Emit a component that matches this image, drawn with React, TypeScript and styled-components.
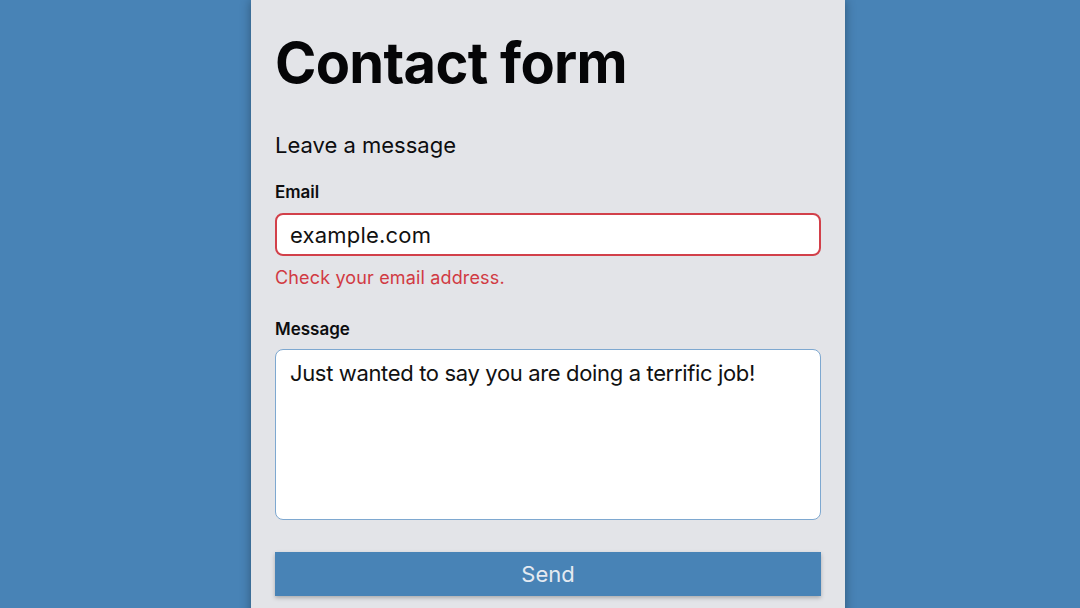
import React from "react";
import styled, { createGlobalStyle } from "styled-components";

const Global = createGlobalStyle`
  html, body { margin: 0; padding: 0; background: #4883b6; }
  body { font-family: Inter, "Noto Sans", sans-serif; color: #0d0d0f; }
  * { box-sizing: border-box; }
`;

const Page = styled.div`
  display: flex;
  justify-content: center;
  min-height: 100vh;
  padding-left: 16px;
`;

const Card = styled.main`
  width: 594px;
  min-height: 100vh;
  background: #e3e4e8;
  box-shadow: 0 0 10px rgba(0, 0, 0, 0.35);
  padding: 35px 24px 24px;
  display: flex;
  flex-direction: column;
`;

const Title = styled.h1`
  margin: 0;
  font-size: 56px;
  line-height: 56px;
  font-weight: 700;
  letter-spacing: -0.7px;
  color: #050507;
`;

const Subtitle = styled.h2`
  margin: 40px 0 0;
  font-size: 22px;
  line-height: 28px;
  font-weight: 400;
`;

const Label = styled.label<{ $top: number }>`
  display: block;
  margin-top: ${(p) => p.$top}px;
  font-size: 17px;
  line-height: 22px;
  font-weight: 600;
`;

const Input = styled.input<{ $invalid?: boolean }>`
  margin-top: 10px;
  width: 100%;
  height: 43px;
  border: 2px solid ${(p) => (p.$invalid ? "#d2404a" : "#7ea8d0")};
  border-radius: 8px;
  background: #fff;
  padding: 0 13px;
  font-family: inherit;
  font-size: 22px;
  letter-spacing: 0.2px;
  color: #111;
  outline: none;
`;

const ErrorText = styled.p`
  margin: 10px 0 0;
  font-size: 18px;
  line-height: 24px;
  letter-spacing: 0.15px;
  color: #d13a43;
`;

const TextArea = styled.textarea`
  margin-top: 9px;
  width: 100%;
  height: 171px;
  border: 1.5px solid #7ea8d0;
  border-radius: 8px;
  background: #fff;
  padding: 9px 14px;
  font-family: inherit;
  font-size: 22px;
  line-height: 28px;
  letter-spacing: -0.35px;
  color: #111;
  resize: none;
  outline: none;
`;

const Button = styled.button`
  margin-top: 32px;
  width: 100%;
  height: 44px;
  border: none;
  background: #4883b6;
  color: #e4eaf1;
  font-family: inherit;
  font-size: 22px;
  box-shadow: 0 2px 4px rgba(0, 0, 0, 0.25);
`;

export default function App() {
  return (
    <Page>
      <Global />
      <Card>
        <Title>Contact form</Title>
        <Subtitle>Leave a message</Subtitle>
        <Label $top={22} htmlFor="email">Email</Label>
        <Input id="email" $invalid defaultValue="example.com" />
        <ErrorText>Check your email address.</ErrorText>
        <Label $top={28} htmlFor="msg">Message</Label>
        <TextArea id="msg" defaultValue="Just wanted to say you are doing a terrific job!" />
        <Button>Send</Button>
      </Card>
    </Page>
  );
}
